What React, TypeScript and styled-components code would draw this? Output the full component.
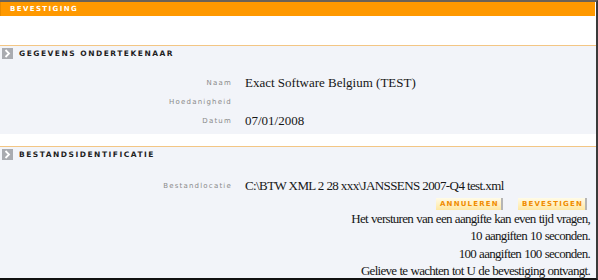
import React from 'react';
import styled, { createGlobalStyle } from 'styled-components';

const GlobalStyle = createGlobalStyle`
    html, body {
        margin: 0;
        padding: 0;
        background: #ffffff;
    }
`;

const fields = [
    { label: 'Naam', value: 'Exact Software Belgium (TEST)' },
    { label: 'Hoedanigheid', value: '' },
    { label: 'Datum', value: '07/01/2008' },
];

const notes = [
    'Het versturen van een aangifte kan even tijd vragen,',
    '10 aangiften 10 seconden.',
    '100 aangiften 100 seconden.',
    'Gelieve te wachten tot U de bevestiging ontvangt.',
];

const Arrow = () => (
    <ArrowBox>
        <svg width="7" height="9" viewBox="0 0 7 9">
            <path d="M1.5 1 L5 4.5 L1.5 8" fill="none" stroke="#ffffff" strokeWidth="1.8" />
        </svg>
    </ArrowBox>
);

const App = () => {
    return (
        <>
            <GlobalStyle />
            <Panel>
                <TitleBar>BEVESTIGING</TitleBar>
                <Blank />
                <Section>
                    <SectionHeader>
                        <Arrow />
                        <SectionTitle>GEGEVENS ONDERTEKENAAR</SectionTitle>
                    </SectionHeader>
                    <Fields $top={12}>
                        {fields.map((f) => (
                            <FieldRow key={f.label}>
                                <Label>{f.label}</Label>
                                <Value>{f.value}</Value>
                            </FieldRow>
                        ))}
                    </Fields>
                </Section>
                <Gap />
                <Section $grow>
                    <SectionHeader>
                        <Arrow />
                        <SectionTitle>BESTANDSIDENTIFICATIE</SectionTitle>
                    </SectionHeader>
                    <Fields $top={14.5}>
                        <FieldRow>
                            <Label>Bestandlocatie</Label>
                            <Value $tight>C:\BTW XML 2 28 xxx\JANSSENS 2007-Q4 test.xml</Value>
                        </FieldRow>
                    </Fields>
                    <Buttons>
                        <Button>ANNULEREN</Button>
                        <Button>BEVESTIGEN</Button>
                    </Buttons>
                    <Notes>
                        {notes.map((n) => (
                            <div key={n}>{n}</div>
                        ))}
                    </Notes>
                </Section>
            </Panel>
        </>
    );
};

const Panel = styled.div`
    width: 598px;
    height: 280px;
    box-sizing: border-box;
    border-top: 2px solid #6b6257;
    border-right: 2px solid #3a3a3a;
    border-bottom: 2px solid #111111;
    display: flex;
    flex-direction: column;
    background: #ffffff;
    overflow: hidden;
`;

const TitleBar = styled.div`
    flex-shrink: 0;
    height: 14px;
    margin-right: 1px;
    background: #ff9900;
    border-left: 1px solid #e88a00;
    color: #ffffff;
    font-family: "DejaVu Sans", Verdana, sans-serif;
    font-weight: bold;
    font-size: 7px;
    letter-spacing: 1.4px;
    line-height: 14px;
    padding-left: 9px;
`;

const Blank = styled.div`
    flex-shrink: 0;
    height: 29px;
`;

const Gap = styled.div`
    flex-shrink: 0;
    height: 12px;
`;

const Section = styled.section<{ $grow?: boolean }>`
    flex: ${(p) => (p.$grow ? '1 1 auto' : '0 0 auto')};
    min-height: 0;
    overflow: hidden;
    border-top: 1px solid #f3c684;
    background: #f2f4f9;
    padding-bottom: ${(p) => (p.$grow ? '0' : '4px')};
`;

const SectionHeader = styled.div`
    display: flex;
    align-items: center;
    height: 15px;
    padding-left: 2px;
    gap: 6px;
`;

const ArrowBox = styled.span`
    width: 11px;
    height: 11px;
    background: #a9abb0;
    display: flex;
    align-items: center;
    justify-content: center;
`;

const SectionTitle = styled.span`
    font-family: "DejaVu Sans", Verdana, sans-serif;
    font-weight: bold;
    font-size: 7.5px;
    letter-spacing: 1.5px;
    color: #1e1e1e;
`;

const Fields = styled.div<{ $top: number }>`
    display: flex;
    flex-direction: column;
    padding-top: ${(p) => p.$top}px;
`;

const FieldRow = styled.div`
    display: grid;
    grid-template-columns: 231px 1fr;
    column-gap: 14px;
    align-items: center;
    height: 19px;
`;

const Label = styled.span`
    text-align: right;
    margin-right: -1px;
    font-family: "DejaVu Sans", Verdana, sans-serif;
    font-size: 7px;
    letter-spacing: 1.2px;
    color: #8a8a8a;
`;

const Value = styled.span<{ $tight?: boolean }>`
    font-family: "Liberation Serif", "Times New Roman", serif;
    font-size: 13px;
    letter-spacing: ${(p) => (p.$tight ? '-0.6px' : '0')};
    color: #161616;
    white-space: nowrap;
`;

const Buttons = styled.div`
    display: flex;
    justify-content: flex-end;
    gap: 15px;
    padding: 2.5px 9px 0 0;
`;

const Button = styled.span`
    height: 12px;
    line-height: 12px;
    padding: 0 2px 0 4px;
    background: linear-gradient(#fffbe8, #ffe7a0);
    border-right: 2px solid #b5b5b5;
    color: #f08c00;
    font-family: "DejaVu Sans", Verdana, sans-serif;
    font-weight: bold;
    font-size: 7px;
    letter-spacing: 1.2px;
`;

const Notes = styled.div`
    text-align: right;
    padding: 0 6px 0 0;
    font-family: "Liberation Serif", "Times New Roman", serif;
    font-size: 13px;
    letter-spacing: -0.7px;
    word-spacing: 0.5px;
    line-height: 17.3px;
    color: #161616;
`;

export default App;
